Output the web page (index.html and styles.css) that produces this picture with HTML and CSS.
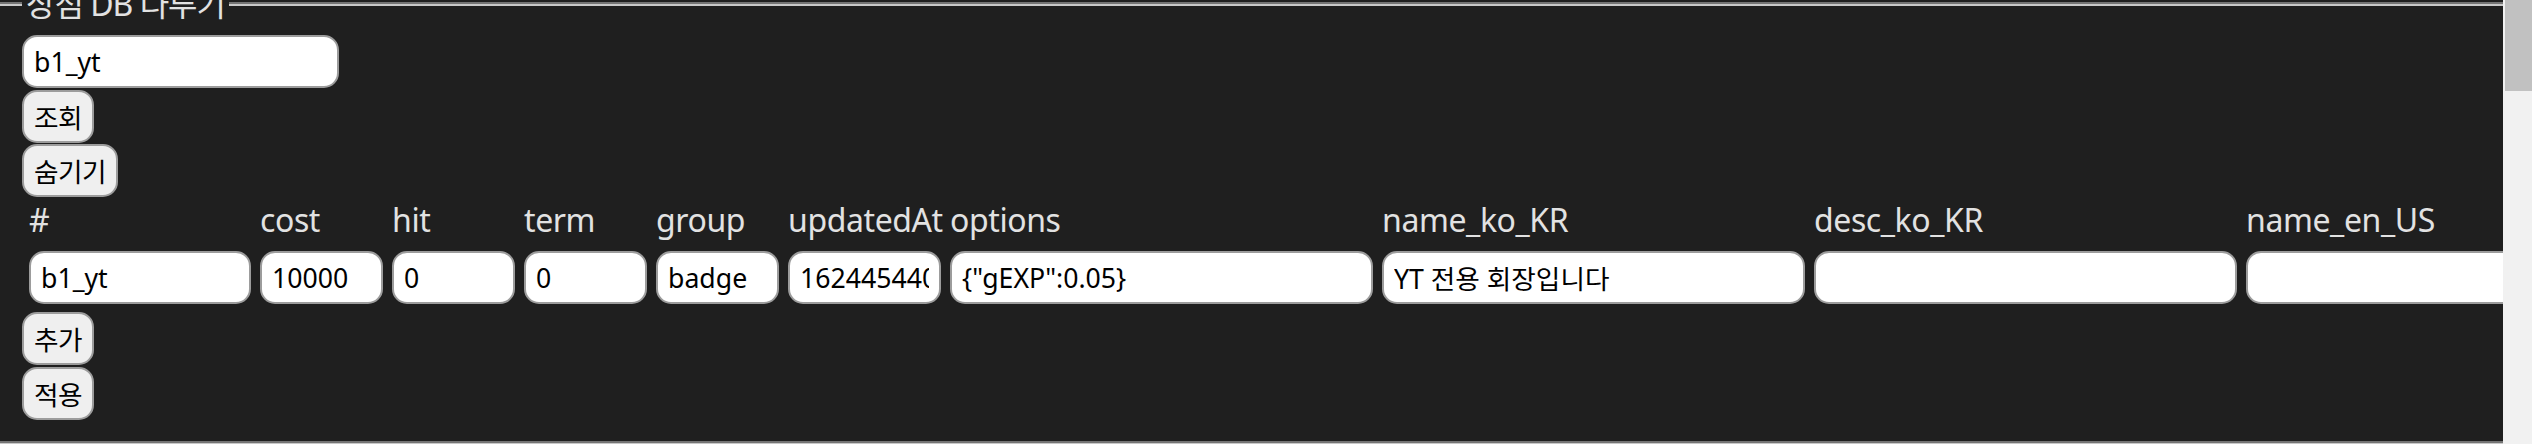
FILE: index.html
```html
<!DOCTYPE html>
<html lang="ko">
<head>
<meta charset="utf-8">
<title>상점 DB 다루기</title>
<link rel="stylesheet" href="styles.css">
</head>
<body>
<div class="screen">
  <div class="viewport">
    <fieldset class="panel">
      <legend class="panel-title">상점 DB 다루기</legend>
      <div class="stack">
        <input class="field field-search" type="text" value="b1_yt">
        <button class="btn" type="button">조회</button>
        <button class="btn" type="button">숨기기</button>
      </div>
      <div class="table">
        <div class="th">#</div>
        <div class="th">cost</div>
        <div class="th">hit</div>
        <div class="th">term</div>
        <div class="th">group</div>
        <div class="th">updatedAt</div>
        <div class="th">options</div>
        <div class="th">name_ko_KR</div>
        <div class="th">desc_ko_KR</div>
        <div class="th">name_en_US</div>
        <input class="field" type="text" value="b1_yt">
        <input class="field" type="text" value="10000">
        <input class="field" type="text" value="0">
        <input class="field" type="text" value="0">
        <input class="field" type="text" value="badge">
        <input class="field" type="text" value="1624454400000">
        <input class="field" type="text" value='{"gEXP":0.05}'>
        <input class="field" type="text" value="YT 전용 회장입니다">
        <input class="field" type="text" value="">
        <input class="field" type="text" value="">
      </div>
      <div class="stack stack-bottom">
        <button class="btn" type="button">추가</button>
        <button class="btn" type="button">적용</button>
      </div>
    </fieldset>
  </div>
  <div class="scrollbar"><div class="scrollbar-thumb"></div></div>
</div>
</body>
</html>
```

FILE: styles.css
```css
html, body {
  margin: 0;
  padding: 0;
  height: 444px;
  overflow: hidden;
  background: #1f1f1f;
}

body {
  font-family: "Noto Sans", "Noto Sans CJK KR", sans-serif;
  color: #e2e2e2;
}

.screen {
  display: flex;
  height: 444px;
}

.viewport {
  flex: 1;
  min-width: 0;
  height: 444px;
  overflow: hidden;
  background: #1f1f1f;
}

.panel {
  margin: -17px 0 0 -6px;
  padding: 10px 24px 21px 24px;
  border: 4px groove #c8c8c8;
  min-width: max-content;
}

.panel-title {
  font-size: 32px;
  line-height: 42px;
  padding: 0 4px;
  letter-spacing: -1px;
  color: #e2e2e2;
}

.stack {
  display: flex;
  flex-direction: column;
  align-items: flex-start;
  gap: 1.5px;
}

.stack-bottom {
  margin-top: 8px;
}

.field {
  box-sizing: border-box;
  height: 53px;
  margin: 0;
  padding: 0 10px;
  border: 2px solid #9c9c9c;
  border-radius: 15px;
  background: #ffffff;
  color: #000000;
  font-family: "Noto Sans", "Noto Sans CJK KR", sans-serif;
  font-size: 26.67px;
  min-width: 0;
  width: 100%;
}

.field-search {
  width: 317px;
}

.btn {
  box-sizing: border-box;
  height: 53px;
  margin: 0;
  padding: 0 10px;
  border: 2px solid #9c9c9c;
  border-radius: 15px;
  background: #efefef;
  color: #000000;
  font-family: "Noto Sans CJK KR", "Noto Sans", sans-serif;
  font-size: 26.67px;
  letter-spacing: -0.5px;
}

.table {
  display: grid;
  grid-template-columns: 222px 123px 123px 123px 123px 153px 423px 423px 423px 423px;
  column-gap: 9px;
  row-gap: 11px;
  margin-top: 3px;
  padding-left: 7px;
}

.th {
  font-size: 32px;
  line-height: 40px;
  height: 40px;
  white-space: nowrap;
  letter-spacing: -0.4px;
  color: #e2e2e2;
}

.scrollbar {
  width: 29px;
  flex: none;
  height: 444px;
  background: #f1f1f1;
  display: flex;
  justify-content: flex-end;
}

.scrollbar-thumb {
  width: 27px;
  height: 91px;
  background: #c1c1c1;
}
```
